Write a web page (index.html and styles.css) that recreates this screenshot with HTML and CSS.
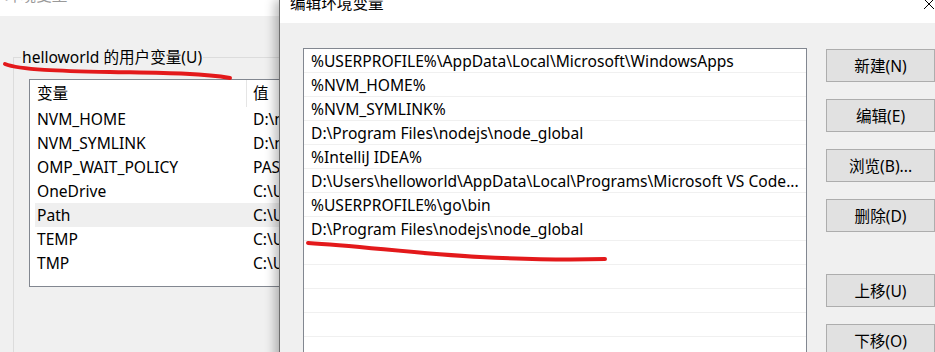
FILE: index.html
```html
<!DOCTYPE html>
<html lang="zh-CN">

<head>
  <meta charset="UTF-8">
  <meta name="viewport" content="width=device-width, initial-scale=1.0">
  <title>编辑环境变量</title>

  <link rel="stylesheet" href="styles.css">
</head>

<body>
  <div class="desktop">
    <!-- 后面的窗口：环境变量 -->
    <div class="win win-env">
      <div class="titlebar">
        <span class="title">环境变量</span>
      </div>
      <div class="win-body">
        <fieldset class="group">
          <legend>helloworld 的用户变量(U)</legend>
          <div class="listview">
            <div class="lv-head">
              <span class="col-name">变量</span>
              <span class="col-value">值</span>
            </div>
            <div class="lv-row"><span class="col-name">NVM_HOME</span><span class="col-value">D:\nvm</span></div>
            <div class="lv-row"><span class="col-name">NVM_SYMLINK</span><span class="col-value">D:\nodejs</span></div>
            <div class="lv-row"><span class="col-name">OMP_WAIT_POLICY</span><span class="col-value">PASSIVE</span></div>
            <div class="lv-row"><span class="col-name">OneDrive</span><span class="col-value">C:\Users</span></div>
            <div class="lv-row selected"><span class="col-name">Path</span><span class="col-value">C:\Users</span></div>
            <div class="lv-row"><span class="col-name">TEMP</span><span class="col-value">C:\Users</span></div>
            <div class="lv-row"><span class="col-name">TMP</span><span class="col-value">C:\Users</span></div>
          </div>
        </fieldset>
      </div>
    </div>

    <!-- 前面的窗口：编辑环境变量 -->
    <div class="win win-edit">
      <div class="titlebar">
        <span class="title">编辑环境变量</span>
        <svg class="btn-x" width="12" height="12" viewBox="0 0 12 12">
          <path d="M1 1 L11 11 M11 1 L1 11" stroke="#000" stroke-width="1" fill="none" />
        </svg>
      </div>
      <div class="win-body edit-body">
        <div class="path-list">
          <div class="path-row">%USERPROFILE%\AppData\Local\Microsoft\WindowsApps</div>
          <div class="path-row">%NVM_HOME%</div>
          <div class="path-row">%NVM_SYMLINK%</div>
          <div class="path-row">D:\Program Files\nodejs\node_global</div>
          <div class="path-row">%IntelliJ IDEA%</div>
          <div class="path-row">D:\Users\helloworld\AppData\Local\Programs\Microsoft VS Code...</div>
          <div class="path-row">%USERPROFILE%\go\bin</div>
          <div class="path-row">D:\Program Files\nodejs\node_global</div>
          <div class="path-row"></div>
          <div class="path-row"></div>
          <div class="path-row"></div>
          <div class="path-row"></div>
          <div class="path-row"></div>
        </div>

        <div class="actions">
          <button class="btn">新建(N)</button>
          <button class="btn">编辑(E)</button>
          <button class="btn">浏览(B)...</button>
          <button class="btn">删除(D)</button>
          <button class="btn btn-gap">上移(U)</button>
          <button class="btn">下移(O)</button>
        </div>
      </div>
    </div>

    <!-- 红色手绘标记 -->
    <svg class="marks" width="935" height="352" viewBox="0 0 935 352">
      <path d="M5 64 C 20 70, 60 71, 110 72 S 200 73, 230 78" />
      <path d="M308 243 C 360 246, 420 254, 480 257 S 570 260, 605 259" />
    </svg>
  </div>
</body>

</html>
```

FILE: styles.css
```css
* {
  box-sizing: border-box;
}

body {
  margin: 0;
  background-color: #f0f0f0;
  font-family: "Noto Sans", "Noto Sans CJK SC", sans-serif;
  font-size: 15.6px;
  color: #000;
}

.desktop {
  position: relative;
  width: 935px;
  height: 352px;
  overflow: hidden;
}

.win {
  position: absolute;
  top: 0;
  background-color: #f0f0f0;
}

.titlebar {
  position: relative;
  background-color: #fff;
  overflow: hidden;
}

.title {
  display: block;
  line-height: 20px;
  white-space: nowrap;
}

/* 环境变量窗口 */
.win-env {
  left: 0;
  width: 320px;
  height: 352px;
}

.win-env .titlebar {
  height: 16px;
}

.win-env .title {
  margin: -15px 0 0 5px;
  color: #999;
}

.win-env .win-body {
  padding: 31px 0 0 13px;
}

.group {
  margin: 0;
  padding: 12px 0 0 15px;
  border: 1px solid #dcdcdc;
  height: 320px;
}

.group legend {
  padding: 0 1px;
  margin-left: -8px;
  line-height: 20px;
}

.listview {
  width: 300px;
  height: 208px;
  background-color: #fff;
  border: 1px solid #828790;
}

.lv-head,
.lv-row {
  display: flex;
  white-space: nowrap;
}

.lv-head {
  height: 27px;
  line-height: 27px;
}

.lv-head .col-name {
  border-right: 1px solid #e5e5e5;
}

.lv-row {
  height: 24px;
  line-height: 24px;
  margin-left: 5px;
}

.lv-row .col-name {
  width: 212px;
  padding-left: 2px;
}

.lv-head .col-name {
  width: 217px;
  padding-left: 7px;
}

.col-value {
  padding-left: 6px;
}

.lv-row.selected {
  background-color: #efefef;
}

/* 编辑环境变量窗口 */
.win-edit {
  left: 279px;
  width: 680px;
  height: 380px;
  border-left: 1px solid #6e6e6e;
  box-shadow: -4px 0 10px rgba(0, 0, 0, 0.28);
}

.win-edit .titlebar {
  height: 23px;
}

.win-edit .title {
  margin: -7px 0 0 10px;
}

.btn-x {
  position: absolute;
  left: 643px;
  top: -2px;
}

.edit-body {
  display: flex;
  gap: 19px;
  padding: 25px 0 0 23px;
}

.path-list {
  width: 504px;
  height: 340px;
  background-color: #fff;
  border: 1px solid #828790;
  overflow: hidden;
}

.path-row {
  height: 24px;
  line-height: 25px;
  padding-left: 7px;
  border-bottom: 1px solid #f0f0f0;
  white-space: nowrap;
  overflow: hidden;
}

.actions {
  display: flex;
  flex-direction: column;
  gap: 17px;
  padding-top: 1px;
}

.btn {
  width: 109px;
  height: 33px;
  padding: 0;
  background-color: #e1e1e1;
  border: 1px solid #adadad;
  font-family: inherit;
  font-size: 15.6px;
  color: #000;
}

.btn-gap {
  margin-top: 25px;
}

.marks {
  position: absolute;
  left: 0;
  top: 0;
  pointer-events: none;
}

.marks path {
  fill: none;
  stroke: #e3191b;
  stroke-width: 4;
  stroke-linecap: round;
}
```
